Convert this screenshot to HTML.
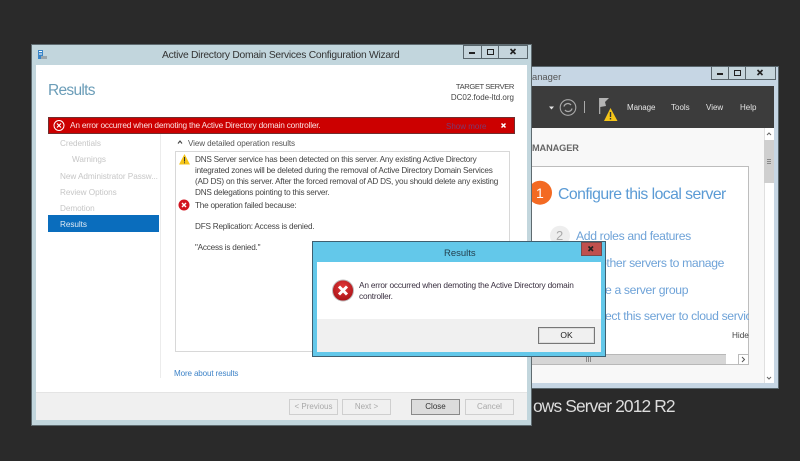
<!DOCTYPE html>
<html><head><meta charset="utf-8"><style>
html,body{margin:0;padding:0;background:#2a2a2a}
body{width:800px;height:461px;background:#2a2a2a;position:relative;overflow:hidden;font-family:"Liberation Sans",sans-serif;color:#333;filter:blur(.3px)}
div{position:absolute;box-sizing:border-box;white-space:nowrap}
svg{position:absolute;left:0;top:0;overflow:visible}
.w{font-size:8.2px;line-height:11px;color:#444;letter-spacing:-.225px}
.nav{left:60px;font-size:8.2px;color:#c6c6c6;letter-spacing:-.05px}
.btn{top:399px;width:49px;height:16px;border:1px solid #cfcfcf;background:#f0f0f0;color:#a8a8a8;font-size:8px;line-height:14px;text-align:center}
.ctl{background:#c5d5dc;border:1px solid #59666c}
.blue{color:#6fa3d8;font-size:12.2px;letter-spacing:-.35px}
.m{color:#e4e4e4;font-size:8px;top:103px}
</style></head><body>

<!-- Server manager back window -->
<div style="left:520px;top:66px;width:259px;height:323px;background:#c6d6e4;border:1px solid #59666c"></div>
<div style="left:532px;top:71px;font-size:9.4px;color:#555">anager</div>
<div class="ctl" style="left:711px;top:66px;width:65px;height:14px"></div>
<div style="left:728px;top:67px;width:1px;height:12px;background:#59666c"></div>
<div style="left:745px;top:67px;width:1px;height:12px;background:#59666c"></div>
<div style="left:717px;top:73px;width:6px;height:2px;background:#222"></div>
<div style="left:734px;top:70px;width:7px;height:6px;border:1.5px solid #222"></div>
<div style="left:520px;top:86px;width:254px;height:42px;background:#3c3c3c"></div>
<div style="left:520px;top:128px;width:254px;height:255px;background:#f8f8f8"></div>
<div style="left:532px;top:143px;font-size:9.2px;font-weight:bold;color:#666;letter-spacing:-.1px">MANAGER</div>

<svg width="800" height="461">
<path d="M757.500 70l5 5M762.500 70l-5 5" stroke="#222" stroke-width="1.600"/>
<path d="M549 106.500h5l-2.500 3z" fill="#e4e4e4"/>
<circle cx="568" cy="107.500" r="7.800" fill="none" stroke="#aaa" stroke-width="1.100"/>
<path d="M564 106.500a4 4 0 0 1 7-1.500M572 108.500a4 4 0 0 1-7 1.500" fill="none" stroke="#aaa" stroke-width="1.300"/>
<rect x="584" y="101" width="1" height="12" fill="#aaa"/>
<rect x="599" y="98" width="1.300" height="16" fill="#aaa"/>
<path d="M600 98h9l-4 4 1 4-6 1z" fill="#b4b4b4"/>
<path d="M610.500 108l7 13h-13.500z" fill="#f5c518"/>
<rect x="609.800" y="112" width="1.400" height="5" fill="#333"/><rect x="609.800" y="118" width="1.400" height="1.500" fill="#333"/>
</svg>
<div class="m" style="left:627px;letter-spacing:-.1px">Manage</div>
<div class="m" style="left:671px">Tools</div>
<div class="m" style="left:706px">View</div>
<div class="m" style="left:740px">Help</div>

<div style="left:520px;top:166px;width:229px;height:199px;background:#fff;border:1px solid #bdbdbd"></div>
<div style="left:520px;top:354px;width:206px;height:11px;background:#d6d6d6;border-top:1px solid #b8b8b8;border-bottom:1px solid #b8b8b8"></div>
<div style="left:738px;top:354px;width:11px;height:11px;background:#fff;border:1px solid #bbb"></div>
<div style="left:586px;top:357px;width:5px;height:5px;background:repeating-linear-gradient(90deg,#888 0 1px,#d6d6d6 1px 2px)"></div>
<svg width="800" height="461"><path d="M742 357l2.500 2.500-2.500 2.500" fill="none" stroke="#555" stroke-width="1"/></svg>

<!-- scrollbar -->
<div style="left:764px;top:128px;width:10px;height:255px;background:#fff;border-left:1px solid #e0e0e0"></div>
<div style="left:764px;top:140px;width:10px;height:43px;background:#cfcfcf"></div>
<div style="left:767px;top:159px;width:4px;height:6px;background:repeating-linear-gradient(#888 0 1px,#cfcfcf 1px 2px)"></div>
<svg width="800" height="461"><path d="M767 135l2-2 2 2M767 377l2 2 2-2" fill="none" stroke="#666" stroke-width="1"/>
<circle cx="540" cy="192.700" r="12" fill="#f36a23"/>
<circle cx="560" cy="235.700" r="10" fill="#eee"/>
</svg>
<div style="left:536px;top:185px;font-size:14px;color:#fff">1</div>
<div style="left:556px;top:228px;font-size:13px;color:#aaa">2</div>
<div style="left:558px;top:186px;font-size:15.800px;color:#5b9bd5;letter-spacing:-.55px">Configure this local server</div>
<div class="blue" style="left:576px;top:229px">Add roles and features</div>
<div class="blue" style="left:600px;top:256px">other servers to manage</div>
<div class="blue" style="left:605px;top:283px">e a server group</div>
<div style="left:520px;top:309px;width:229px;height:16px;overflow:hidden"><div class="blue" style="left:85px;top:0">ect this server to cloud services</div></div>
<div style="left:732px;top:331px;width:17px;overflow:hidden;font-size:8.200px;color:#444">Hide</div>
<div style="left:533px;top:396px;font-size:17.400px;color:#ddd;letter-spacing:-.88px">ows Server 2012 R2</div>

<!-- Wizard window -->
<div style="left:31px;top:44px;width:501px;height:382px;background:#c2d6dd;border:1px solid #5f6b70"></div>
<div style="left:36px;top:65px;width:491px;height:327px;background:#fff"></div>
<div style="left:36px;top:392px;width:491px;height:28px;background:#f0f0f0;border-top:1px solid #e4e4e4"></div>
<div style="left:162px;top:49.500px;font-size:10.300px;color:#333;letter-spacing:-.27px">Active Directory Domain Services Configuration Wizard</div>
<div class="ctl" style="left:463px;top:45px;width:65px;height:14px"></div>
<div style="left:481px;top:46px;width:1px;height:12px;background:#59666c"></div>
<div style="left:498px;top:46px;width:1px;height:12px;background:#59666c"></div>
<div style="left:469px;top:52px;width:6px;height:2px;background:#222"></div>
<div style="left:487px;top:49px;width:7px;height:6px;border:1.5px solid #222"></div>

<div style="left:48px;top:82px;font-size:15.500px;color:#6b9db8;letter-spacing:-.7px">Results</div>
<div style="right:286px;top:81px;font-size:8px;color:#444;text-align:right;line-height:11px"><span style="font-size:7.600px;letter-spacing:-.4px">TARGET SERVER</span><br>DC02.fode-ltd.org</div>

<div style="left:48px;top:117px;width:467px;height:17px;background:#cc0000;border:1px solid #6f2f2f"></div>
<div style="left:70px;top:120px;font-size:8.300px;color:#fbe0e0;letter-spacing:-.2px">An error occurred when demoting the Active Directory domain controller.</div>
<div style="left:446px;top:122px;font-size:8px;color:#7a3a70">Show more</div>

<div style="left:160px;top:134px;width:1px;height:244px;background:#ececec"></div>
<div class="nav" style="top:139px">Credentials</div>
<div class="nav" style="top:155px;left:72px">Warnings</div>
<div class="nav" style="top:172px">New Administrator Passw...</div>
<div class="nav" style="top:188px">Review Options</div>
<div class="nav" style="top:204px">Demotion</div>
<div style="left:48px;top:215px;width:111px;height:17px;background:#0a6dbd"></div>
<div class="nav" style="top:220px;color:#dfeaf4">Results</div>

<div style="left:188px;top:139px;font-size:8.100px;color:#555;letter-spacing:-.1px">View detailed operation results</div>
<div style="left:175px;top:151px;width:335px;height:201px;background:#fff;border:1px solid #d8d8d8"></div>
<div class="w" style="left:195px;top:154px">DNS Server service has been detected on this server. Any existing Active Directory<br>integrated zones will be deleted during the removal of Active Directory Domain Services<br>(AD DS) on this server. After the forced removal of AD DS, you should delete any existing<br>DNS delegations pointing to this server.</div>
<div class="w" style="left:195px;top:200.500px;line-height:10.700px">The operation failed because:<br><br>DFS Replication: Access is denied.<br><br>"Access is denied."</div>
<div style="left:174px;top:369px;font-size:8.100px;color:#3f84c8;letter-spacing:-.15px">More about results</div>

<div class="btn" style="left:289px">&lt; Previous</div>
<div class="btn" style="left:342px">Next &gt;</div>
<div class="btn" style="left:411px;background:#dcdcdc;border-color:#8a8a8a;color:#333">Close</div>
<div class="btn" style="left:465px">Cancel</div>

<svg width="800" height="461">
<rect x="38" y="50" width="5" height="9" fill="#3a86c8"/><rect x="39" y="51" width="3" height="1" fill="#fff"/><rect x="39" y="53.500" width="3" height="1" fill="#fff"/>
<rect x="41" y="56" width="6" height="3" fill="#9aa6ac"/>
<path d="M510.500 49l5 5M515.500 49l-5 5" stroke="#222" stroke-width="1.600"/>
<circle cx="59" cy="125.500" r="5" fill="none" stroke="#fff" stroke-width="1"/>
<path d="M57 123.500l4 4M61 123.500l-4 4" stroke="#fff" stroke-width="1.200"/>
<path d="M501.500 123.500l4 4M505.500 123.500l-4 4" stroke="#fff" stroke-width="1.500"/>
<path d="M184.500 154l5.500 10.500h-11z" fill="#f5c518"/>
<rect x="184" y="157" width="1" height="4.500" fill="#333"/><rect x="184" y="162.300" width="1" height="1" fill="#333"/>
<circle cx="184" cy="205" r="5.500" fill="#d2131f"/>
<path d="M182 203l4 4M186 203l-4 4" stroke="#fff" stroke-width="1.400"/>
<path d="M178 143.500l2-2.500 2 2.500" fill="none" stroke="#444" stroke-width="1.100"/>
</svg>

<!-- Dialog -->
<div style="left:312px;top:241px;width:294px;height:116px;background:#63c8ea;border:1px solid #3f5f70"></div>
<div style="left:317px;top:262px;width:284px;height:90px;background:#fff"></div>
<div style="left:317px;top:319px;width:284px;height:33px;background:#f0f0f0"></div>
<div style="left:444px;top:248px;font-size:9.500px;color:#23404f">Results</div>
<div style="left:581px;top:242px;width:21px;height:14px;background:#c0504d;border:1px solid #7a4a4a"></div>
<svg width="800" height="461">
<defs><radialGradient id="g" cx=".5" cy=".35" r=".7"><stop offset="0" stop-color="#e23a3a"/><stop offset="1" stop-color="#a50f14"/></radialGradient></defs>
<path d="M588.500 246.500l4.500 4.500M593 246.500l-4.500 4.500" stroke="#222" stroke-width="1.600"/>
<circle cx="343" cy="290.500" r="10.500" fill="url(#g)" stroke="#bbb" stroke-width="1"/>
<path d="M339 286.500l8 8M347 286.500l-8 8" stroke="#fff" stroke-width="3"/>
</svg>
<div style="left:359px;top:280px;font-size:8.300px;line-height:11px;color:#3a3040;letter-spacing:-.2px">An error occurred when demoting the Active Directory domain<br>controller.</div>
<div style="left:538px;top:327px;width:57px;height:17px;background:#f0f0f0;border:1px solid #777;box-shadow:inset 0 0 0 1px #ddd;text-align:center;font-size:8.500px;line-height:15px;color:#222">OK</div>
</body></html>
